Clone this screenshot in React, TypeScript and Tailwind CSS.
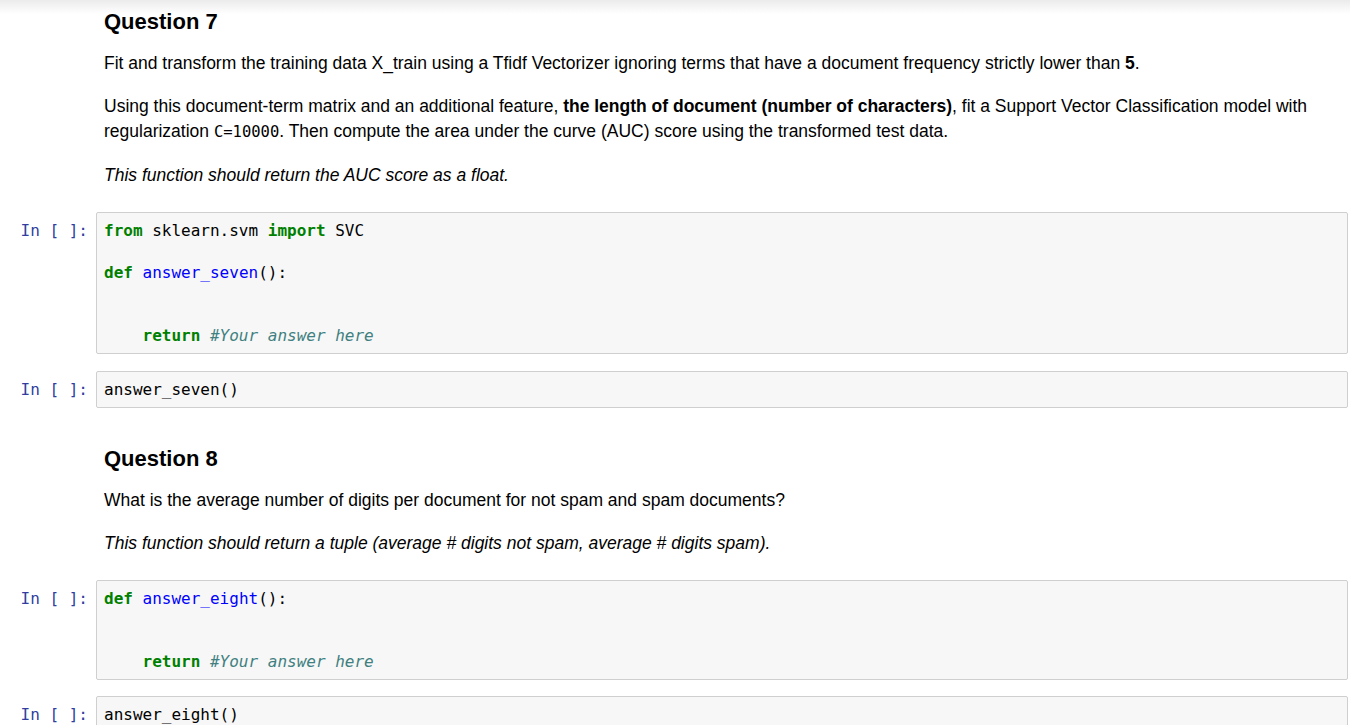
import type { ReactNode } from "react";

const sans = "font-['Liberation_Sans',Arial,sans-serif]";
const mono = "font-['DejaVu_Sans_Mono','Liberation_Mono',monospace]";

function Kw({ children }: { children: ReactNode }) {
  return <span className="font-bold text-[#008000]">{children}</span>;
}

function Fn({ children }: { children: ReactNode }) {
  return <span className="text-[#0000ff]">{children}</span>;
}

function Cm({ children }: { children: ReactNode }) {
  return <span className="italic text-[#408080]">{children}</span>;
}

function CodeCell({ children }: { children: ReactNode }) {
  return (
    <div className={`flex ${mono} text-[16px] leading-[21px]`}>
      <div className="w-[96px] shrink-0 pr-[8px] pt-[8px] text-right text-[#303f9f]">In&nbsp;[&nbsp;]:</div>
      <pre
        className={`mr-[2px] flex-1 rounded-[2px] border border-[#cfcfcf] bg-[#f7f7f7] px-[7px] py-[7px] ${mono} text-[16px] leading-[21px] text-black whitespace-pre`}
      >
        {children}
      </pre>
    </div>
  );
}

function Markdown({ children }: { children: ReactNode }) {
  return <div className={`ml-[96px] mr-[2px] px-[8px] ${sans} text-black`}>{children}</div>;
}

function Heading({ children }: { children: ReactNode }) {
  return <h3 className="mb-[16px] text-[22px] font-bold leading-[26px]">{children}</h3>;
}

function P({ children, last }: { children: ReactNode; last?: boolean }) {
  return <p className={`${last ? "mb-[24px]" : "mb-[18px]"} text-[17.5px] leading-[25px]`}>{children}</p>;
}

export default function App() {
  return (
    <div className="min-h-[725px] bg-[linear-gradient(to_bottom,#ebebeb,#ffffff_14px)] pt-[9px]">
      <Markdown>
        <Heading>Question 7</Heading>
        <P>
          Fit and transform the training data X_train using a Tfidf Vectorizer ignoring terms that have a document
          frequency strictly lower than <b>5</b>.
        </P>
        <P>
          Using this document-term matrix and an additional feature,{" "}
          <b>the length of document (number of characters)</b>, fit a Support Vector Classification model with
          regularization <code className={`${mono} text-[15.5px]`}>C=10000</code>. Then compute the area under the
          curve (AUC) score using the transformed test data.
        </P>
        <P last>
          <i>This function should return the AUC score as a float.</i>
        </P>
      </Markdown>

      <div className="flex flex-col gap-[17px]">
        <CodeCell>
          <Kw>from</Kw> sklearn.svm <Kw>import</Kw> SVC{"\n\n"}
          <Kw>def</Kw> <Fn>answer_seven</Fn>():{"\n\n\n"}
          {"    "}
          <Kw>return</Kw> <Cm>#Your answer here</Cm>
        </CodeCell>
        <CodeCell>answer_seven()</CodeCell>
      </div>

      <div className="mt-[38px]">
        <Markdown>
          <Heading>Question 8</Heading>
          <P>What is the average number of digits per document for not spam and spam documents?</P>
          <P last>
            <i>This function should return a tuple (average # digits not spam, average # digits spam).</i>
          </P>
        </Markdown>
      </div>

      <div className="flex flex-col gap-[16px]">
        <CodeCell>
          <Kw>def</Kw> <Fn>answer_eight</Fn>():{"\n\n\n"}
          {"    "}
          <Kw>return</Kw> <Cm>#Your answer here</Cm>
        </CodeCell>
        <CodeCell>answer_eight()</CodeCell>
      </div>
    </div>
  );
}
